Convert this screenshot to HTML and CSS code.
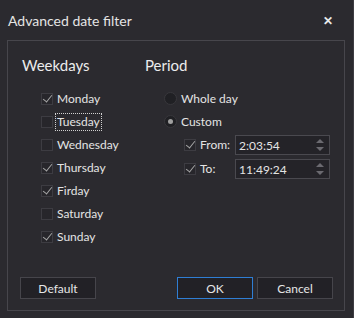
FILE: index.html
```html
<!DOCTYPE html>
<html lang="en">
<head>
    <meta charset="UTF-8">
    <title>Advanced date filter</title>
    <link rel="stylesheet" href="styles.css">
</head>
<body>
    <div class="window">
        <div class="titlebar">
            <span class="title">Advanced date filter</span>
            <span class="close">&#x2715;</span>
        </div>

        <div class="panel">
            <div class="columns">
                <!-- Weekdays -->
                <div class="col weekdays">
                    <h2>Weekdays</h2>
                    <ul class="check-list">
                        <li><span class="box checked"></span><span class="lbl">Monday</span></li>
                        <li><span class="box"></span><span class="lbl focus">Tuesday</span></li>
                        <li><span class="box"></span><span class="lbl">Wednesday</span></li>
                        <li><span class="box checked"></span><span class="lbl">Thursday</span></li>
                        <li><span class="box checked"></span><span class="lbl">Firday</span></li>
                        <li><span class="box"></span><span class="lbl">Saturday</span></li>
                        <li><span class="box checked"></span><span class="lbl">Sunday</span></li>
                    </ul>
                </div>

                <!-- Period -->
                <div class="col period">
                    <h2>Period</h2>
                    <ul class="check-list">
                        <li><span class="radio"></span><span class="lbl">Whole day</span></li>
                        <li><span class="radio on"></span><span class="lbl">Custom</span></li>
                    </ul>
                    <div class="times">
                        <div class="time-row">
                            <span class="box checked"></span><span class="lbl time-lbl">From:</span>
                            <div class="time-input"><span>2:03:54</span><span class="spin"><i class="up"></i><i class="down"></i></span></div>
                        </div>
                        <div class="time-row">
                            <span class="box checked"></span><span class="lbl time-lbl">To:</span>
                            <div class="time-input"><span>11:49:24</span><span class="spin"><i class="up"></i><i class="down"></i></span></div>
                        </div>
                    </div>
                </div>
            </div>

            <div class="footer">
                <button class="btn">Default</button>
                <span class="spacer"></span>
                <button class="btn primary">OK</button>
                <button class="btn">Cancel</button>
            </div>
        </div>
    </div>
</body>
</html>
```

FILE: styles.css
```css
body {
    margin: 0;
    width: 354px;
    height: 318px;
    background: #2b2a2f;
    font-family: Lato, 'Noto Sans', sans-serif;
    color: #e4e4e4;
    overflow: hidden;
}

.window {
    height: 318px;
    border-right: 1px solid #3d3c42;
    box-sizing: border-box;
}

.titlebar {
    height: 40px;
    display: flex;
    align-items: center;
    padding: 0 20px 0 8px;
    box-sizing: border-box;
}

.title {
    font-size: 14px;
    flex: 1;
    margin-top: 1px;
}

.close {
    font-size: 12px;
    font-weight: bold;
    color: #eaeaea;
    font-family: 'Noto Sans', sans-serif;
}

.panel {
    margin: 0 8px 0 7px;
    height: 271px;
    border: 1px solid #47464c;
    box-sizing: border-box;
    display: flex;
    flex-direction: column;
    padding: 14px 11px 11px 12px;
}

.columns {
    display: flex;
}

.col h2 {
    margin: 0;
    font-size: 15px;
    font-weight: normal;
    line-height: 20px;
    color: #ececec;
}

.weekdays {
    width: 123px;
    padding-left: 2px;
}

.check-list {
    list-style: none;
    margin: 12px 0 0 19px;
    padding: 0;
}

.check-list li {
    height: 23px;
    display: flex;
    align-items: center;
}

.lbl {
    font-size: 12px;
    margin-left: 3px;
    line-height: 16px;
    padding: 0 1px;
}

.lbl.focus {
    outline: 1px dotted #d0d0d0;
}

.box {
    width: 10px;
    height: 10px;
    border: 1px solid #3d3c42;
    background: #27262b;
    position: relative;
    flex: none;
}

.box.checked::after {
    content: "";
    position: absolute;
    left: 3px;
    top: -1px;
    width: 4px;
    height: 8px;
    border: solid #a8a8a8;
    border-width: 0 1px 1px 0;
    transform: rotate(38deg);
}

.radio {
    width: 11px;
    height: 11px;
    border-radius: 50%;
    background: #202024;
    border: 1px solid #38373c;
    position: relative;
    flex: none;
}

.radio.on::after {
    content: "";
    position: absolute;
    left: 3px;
    top: 3px;
    width: 5px;
    height: 5px;
    border-radius: 50%;
    background: #a0a0a0;
}

.times {
    margin-left: 39px;
}

.time-row {
    height: 24px;
    display: flex;
    align-items: center;
}

.time-lbl {
    width: 33px;
}

.time-input {
    margin-left: 1px;
    width: 95px;
    height: 20px;
    border: 1px solid #4a494f;
    background: #242328;
    box-sizing: border-box;
    display: flex;
    align-items: center;
    justify-content: space-between;
    padding: 0 5px 0 3px;
    font-size: 12px;
}

.spin {
    display: flex;
    flex-direction: column;
    gap: 4px;
}

.spin i {
    width: 0;
    height: 0;
    border-left: 4px solid transparent;
    border-right: 4px solid transparent;
}

.spin .up {
    border-bottom: 4px solid #6b6a70;
}

.spin .down {
    border-top: 4px solid #6b6a70;
}

.footer {
    margin-top: auto;
    display: flex;
    gap: 4px;
}

.spacer {
    flex: 1;
}

.btn {
    width: 76px;
    height: 22px;
    background: #222126;
    border: 1px solid #46454b;
    color: #e6e6e6;
    font-family: inherit;
    font-size: 12px;
    padding: 0;
}

.btn.primary {
    border-color: #2f7ed4;
}
```
